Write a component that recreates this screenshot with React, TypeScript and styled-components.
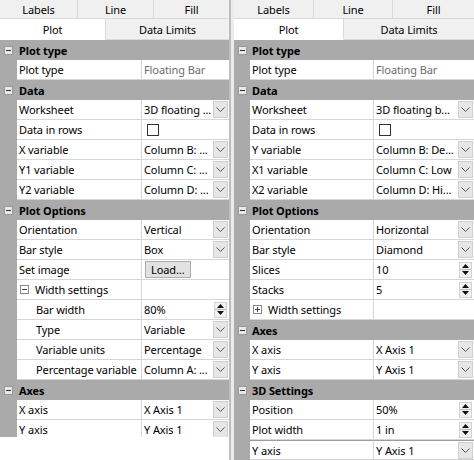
import React from "react";
import styled, { createGlobalStyle } from "styled-components";

type Control = "drop" | "spin" | "check" | "button" | "none";

type Item =
  | { kind: "cat"; label: string }
  | {
      kind: "prop";
      name: string;
      value?: string;
      control?: Control;
      readOnly?: boolean;
      indent?: boolean;
      sub?: "open" | "closed";
      focus?: boolean;
    };

type PanelSpec = {
  width: number;
  gutter: number;
  nameCol: number;
  gridHeight: number;
  topTabs: [string, number][];
  bottomTabs: [string, number][];
  items: Item[];
};

const cat = (label: string): Item => ({ kind: "cat", label });
const prop = (name: string, value = "", control: Control = "drop", extra: Partial<Item> = {}): Item =>
  ({ kind: "prop", name, value, control, ...extra } as Item);

const leftPanel: PanelSpec = {
  width: 229,
  gutter: 17,
  nameCol: 125,
  gridHeight: 397,
  topTabs: [
    ["Labels", 78],
    ["Line", 76],
    ["Fill", 75],
  ],
  bottomTabs: [
    ["Plot", 106],
    ["Data Limits", 123],
  ],
  items: [
    cat("Plot type"),
    prop("Plot type", "Floating Bar", "none", { readOnly: true }),
    cat("Data"),
    prop("Worksheet", "3D floating ..."),
    prop("Data in rows", "", "check"),
    prop("X variable", "Column B: ..."),
    prop("Y1 variable", "Column C: ..."),
    prop("Y2 variable", "Column D: ..."),
    cat("Plot Options"),
    prop("Orientation", "Vertical"),
    prop("Bar style", "Box"),
    prop("Set image", "Load...", "button"),
    prop("Width settings", "", "none", { sub: "open" }),
    prop("Bar width", "80%", "spin", { indent: true }),
    prop("Type", "Variable", "drop", { indent: true }),
    prop("Variable units", "Percentage", "drop", { indent: true }),
    prop("Percentage variable", "Column A: ...", "drop", { indent: true }),
    cat("Axes"),
    prop("X axis", "X Axis 1"),
    prop("Y axis", "Y Axis 1"),
  ],
};

const rightPanel: PanelSpec = {
  width: 240,
  gutter: 16,
  nameCol: 124,
  gridHeight: 420,
  topTabs: [
    ["Labels", 80],
    ["Line", 79],
    ["Fill", 81],
  ],
  bottomTabs: [
    ["Plot", 110],
    ["Data Limits", 130],
  ],
  items: [
    cat("Plot type"),
    prop("Plot type", "Floating Bar", "none", { readOnly: true }),
    cat("Data"),
    prop("Worksheet", "3D floating b..."),
    prop("Data in rows", "", "check"),
    prop("Y variable", "Column B: De..."),
    prop("X1 variable", "Column C: Low"),
    prop("X2 variable", "Column D: Hi..."),
    cat("Plot Options"),
    prop("Orientation", "Horizontal"),
    prop("Bar style", "Diamond"),
    prop("Slices", "10", "spin"),
    prop("Stacks", "5", "spin"),
    prop("Width settings", "", "none", { sub: "closed" }),
    cat("Axes"),
    prop("X axis", "X Axis 1"),
    prop("Y axis", "Y Axis 1"),
    cat("3D Settings"),
    prop("Position", "50%", "spin"),
    prop("Plot width", "1 in", "spin"),
    prop("Y axis", "Y Axis 1", "drop", { focus: true }),
  ],
};

const GlobalStyle = createGlobalStyle`
  html, body {
    margin: 0;
    padding: 0;
    background: #ffffff;
  }
  body {
    font-family: "Noto Sans", "Open Sans", sans-serif;
    font-size: 11px;
    letter-spacing: -0.1px;
    color: #000;
  }
`;

const Page = styled.div`
  display: flex;
  width: 474px;
  height: 460px;
  overflow: hidden;
  background: #ffffff;
`;

const Panel = styled.div<{ $w: number }>`
  display: flex;
  flex-direction: column;
  width: ${(p) => p.$w}px;
  flex-shrink: 0;
`;

const Separator = styled.div`
  width: 5px;
  flex-shrink: 0;
  box-sizing: border-box;
  border-left: 2px solid #bdbdbd;
  background: #ebebeb;
`;

const TabRow = styled.div<{ $h: number }>`
  display: flex;
  height: ${(p) => p.$h}px;
`;

const Tab = styled.div<{ $w: number; $active?: boolean }>`
  width: ${(p) => p.$w}px;
  box-sizing: border-box;
  display: flex;
  align-items: center;
  justify-content: center;
  background: ${(p) => (p.$active ? "#ffffff" : "#f0f0f0")};
  border-right: 1px solid #d9d9d9;
  border-bottom: 1px solid ${(p) => (p.$active ? "#ffffff" : "#d9d9d9")};
  &:last-child {
    border-right: none;
  }
`;

const Grid = styled.div<{ $h: number }>`
  height: ${(p) => p.$h}px;
  overflow: hidden;
  background: #aaaaaa;
`;

const Row = styled.div<{ $cols: string }>`
  display: grid;
  grid-template-columns: ${(p) => p.$cols};
  height: 20px;
`;

const Gutter = styled.div`
  display: flex;
  align-items: center;
  justify-content: center;
  background: #aaaaaa;
`;

const CatLabel = styled.div`
  grid-column: 2 / 4;
  display: flex;
  align-items: center;
  padding-left: 2px;
  font-weight: 700;
  background: #aaaaaa;
`;

const NameCell = styled.div<{ $indent?: boolean; $focus?: boolean }>`
  display: flex;
  align-items: center;
  gap: 6px;
  box-sizing: border-box;
  padding-left: ${(p) => (p.$indent ? 19 : 2)}px;
  background: #ffffff;
  border-right: 1px solid #d6d6d6;
  border-bottom: 1px solid #d6d6d6;
  border-top: ${(p) => (p.$focus ? "1px solid #9c9c9c" : "none")};
  white-space: nowrap;
  overflow: hidden;
`;

const ValueCell = styled.div<{ $focus?: boolean }>`
  display: flex;
  align-items: center;
  box-sizing: border-box;
  padding-left: 2px;
  background: #ffffff;
  border-bottom: 1px solid #d6d6d6;
  border-top: ${(p) => (p.$focus ? "1px solid #9c9c9c" : "none")};
  overflow: hidden;
`;

const ValueText = styled.span<{ $muted?: boolean }>`
  flex: 1;
  min-width: 0;
  white-space: nowrap;
  overflow: hidden;
  color: ${(p) => (p.$muted ? "#6d6d6d" : "#000")};
`;

const DropButton = styled.div`
  width: 15px;
  height: 17px;
  margin-right: 1px;
  flex-shrink: 0;
  box-sizing: border-box;
  display: flex;
  align-items: center;
  justify-content: center;
  background: #e6e6e6;
  border: 1px solid #cfcfcf;
`;

const SpinBox = styled.div`
  width: 13px;
  height: 16px;
  margin-right: 2px;
  flex-shrink: 0;
  box-sizing: border-box;
  display: flex;
  flex-direction: column;
  background: #f2f2f2;
  border: 1px solid #d2d2d2;
`;

const SpinHalf = styled.div<{ $top?: boolean }>`
  flex: 1;
  display: flex;
  align-items: center;
  justify-content: center;
  border-bottom: ${(p) => (p.$top ? "1px solid #bdbdbd" : "none")};
`;

const CheckBox = styled.div`
  width: 12px;
  height: 12px;
  margin-left: 3px;
  box-sizing: border-box;
  border: 1px solid #333333;
  background: #ffffff;
`;

const LoadButton = styled.div`
  height: 17px;
  padding: 0 5px;
  margin-left: 1px;
  box-sizing: border-box;
  display: flex;
  align-items: center;
  background: #e1e1e1;
  border: 1px solid #adadad;
`;

const CatToggle = styled.div`
  width: 9px;
  height: 9px;
  box-sizing: border-box;
  display: flex;
  align-items: center;
  justify-content: center;
  background: #e8e8e8;
  border: 1px solid #9a9a9a;
`;

const SubToggle = styled.div`
  width: 9px;
  height: 9px;
  flex-shrink: 0;
  margin-left: 1px;
  box-sizing: border-box;
  display: flex;
  align-items: center;
  justify-content: center;
  background: #ffffff;
  border: 1px solid #8a8a8a;
`;

const Chevron = () => (
  <svg width="9" height="5" viewBox="0 0 9 5">
    <polyline points="0.5,0.5 4.5,4.5 8.5,0.5" fill="none" stroke="#555" strokeWidth="1" />
  </svg>
);

const Triangle = ({ up }: { up?: boolean }) => (
  <svg width="7" height="4" viewBox="0 0 7 4">
    <polygon points={up ? "0,4 7,4 3.5,0" : "0,0 7,0 3.5,4"} fill="#111" />
  </svg>
);

const Sign = ({ plus, color }: { plus?: boolean; color: string }) => (
  <svg width="5" height="5" viewBox="0 0 5 5">
    <rect x="0" y="2" width="5" height="1" fill={color} />
    {plus && <rect x="2" y="0" width="1" height="5" fill={color} />}
  </svg>
);

function ValueControl({ item }: { item: Extract<Item, { kind: "prop" }> }) {
  switch (item.control) {
    case "check":
      return <CheckBox />;
    case "button":
      return <LoadButton>{item.value}</LoadButton>;
    case "spin":
      return (
        <>
          <ValueText>{item.value}</ValueText>
          <SpinBox>
            <SpinHalf $top>
              <Triangle up />
            </SpinHalf>
            <SpinHalf>
              <Triangle />
            </SpinHalf>
          </SpinBox>
        </>
      );
    case "drop":
      return (
        <>
          <ValueText>{item.value}</ValueText>
          <DropButton>
            <Chevron />
          </DropButton>
        </>
      );
    default:
      return <ValueText $muted={item.readOnly}>{item.value}</ValueText>;
  }
}

function PropertyPanel({ spec }: { spec: PanelSpec }) {
  const cols = `${spec.gutter}px ${spec.nameCol}px 1fr`;
  return (
    <Panel $w={spec.width}>
      <TabRow $h={19}>
        {spec.topTabs.map(([label, w]) => (
          <Tab key={label} $w={w}>
            {label}
          </Tab>
        ))}
      </TabRow>
      <TabRow $h={21}>
        {spec.bottomTabs.map(([label, w], i) => (
          <Tab key={label} $w={w} $active={i === 0}>
            {label}
          </Tab>
        ))}
      </TabRow>
      <Grid $h={spec.gridHeight}>
        {spec.items.map((item, i) =>
          item.kind === "cat" ? (
            <Row key={i} $cols={cols}>
              <Gutter>
                <CatToggle>
                  <Sign color="#333" />
                </CatToggle>
              </Gutter>
              <CatLabel>{item.label}</CatLabel>
            </Row>
          ) : (
            <Row key={i} $cols={cols}>
              <Gutter />
              <NameCell $indent={item.indent} $focus={item.focus}>
                {item.sub && (
                  <SubToggle>
                    <Sign plus={item.sub === "closed"} color="#444" />
                  </SubToggle>
                )}
                {item.name}
              </NameCell>
              <ValueCell $focus={item.focus}>
                <ValueControl item={item} />
              </ValueCell>
            </Row>
          )
        )}
      </Grid>
    </Panel>
  );
}

export default function App() {
  return (
    <>
      <GlobalStyle />
      <Page>
        <PropertyPanel spec={leftPanel} />
        <Separator />
        <PropertyPanel spec={rightPanel} />
      </Page>
    </>
  );
}
